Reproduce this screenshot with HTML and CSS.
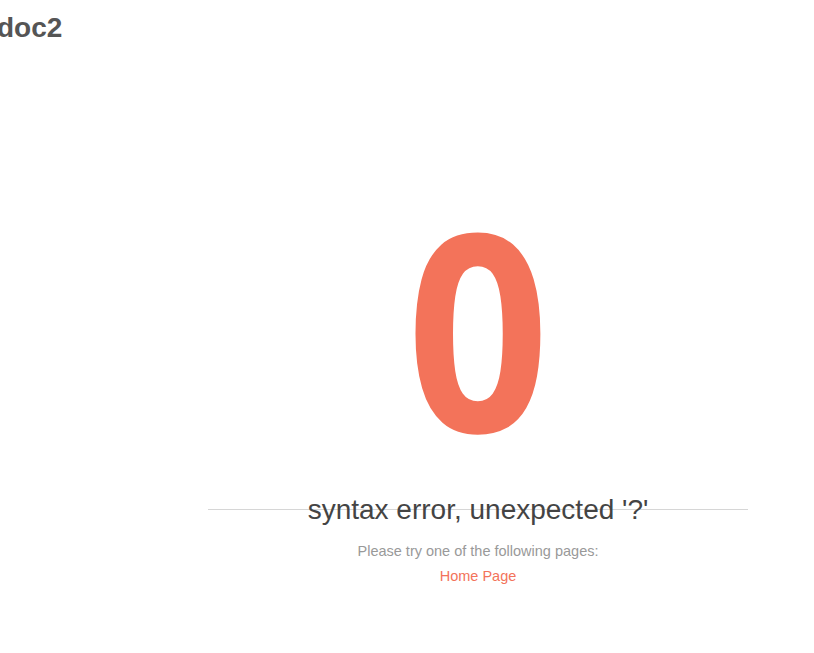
FILE: index.html
```html
<!DOCTYPE html>
<html>
<head>
<meta charset="utf-8">
<title>doc2</title>
<link rel="stylesheet" href="styles.css">
</head>
<body>
<header class="site-header">
  <h1 class="brand">doc2</h1>
</header>
<main class="error-wrap">
  <div class="error-code">0</div>
  <div class="error-title">
    <span class="rule"></span>
    <h2 class="error-msg">syntax error, unexpected '?'</h2>
  </div>
  <p class="hint">Please try one of the following pages:</p>
  <a class="home-link" href="#">Home Page</a>
</main>
</body>
</html>
```
FILE: styles.css
```css
html, body {
  margin: 0;
  padding: 0;
  background: #ffffff;
  font-family: "Liberation Sans", Arial, sans-serif;
}
.site-header {
  padding: 12px 0 0 0;
  height: 40px;
}
.brand {
  margin: 0 0 0 -3px;
  font-size: 28px;
  line-height: 32px;
  font-weight: bold;
  color: #555555;
}
.error-wrap {
  margin: 0 0 0 208px;
  width: 540px;
  text-align: center;
  padding-top: 136px;
}
.error-code {
  font-family: "Open Sans", sans-serif;
  font-weight: 700;
  font-size: 275px;
  line-height: 275px;
  color: #f3735a;
  transform: scaleX(0.91);
}
.error-title {
  position: relative;
  margin-top: 29px;
}
.rule {
  position: absolute;
  left: 0;
  right: 0;
  top: 17px;
  border-top: 1px solid #d6d6d6;
}
.error-msg {
  position: relative;
  margin: 0;
  font-size: 28px;
  font-weight: normal;
  line-height: 36px;
  color: #444444;
}
.hint {
  margin: 13px 0 0 0;
  font-size: 14.5px;
  line-height: 20px;
  color: #999999;
}
.home-link {
  display: inline-block;
  margin-top: 5px;
  font-size: 14.5px;
  line-height: 20px;
  color: #f3735a;
  text-decoration: none;
}
```
